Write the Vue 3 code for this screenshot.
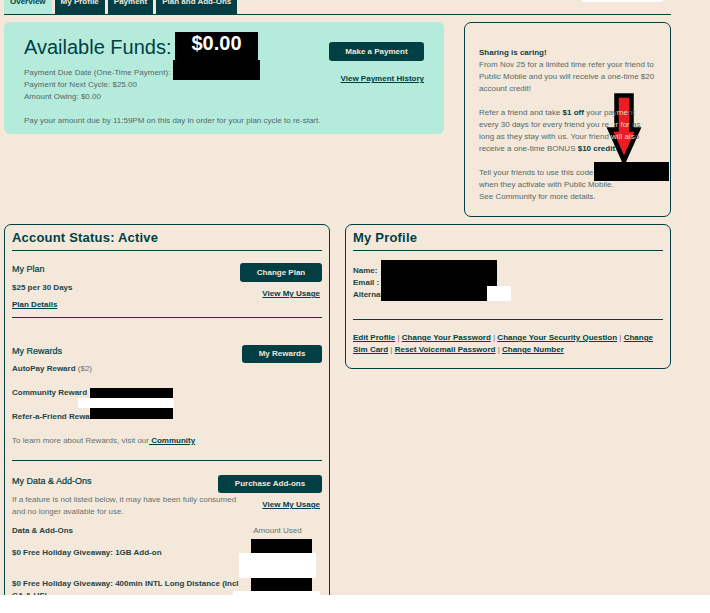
<script setup>
const tabs = [
  { label: 'Overview', active: true },
  { label: 'My Profile' },
  { label: 'Payment' },
  { label: 'Plan and Add-Ons' }
]
const profileLinks = ['Edit Profile', 'Change Your Password', 'Change Your Security Question', 'Change Sim Card', 'Reset Voicemail Password', 'Change Number']
</script>

<template>
  <div class="page">
    <div class="top-chip"></div>
    <nav class="tabs">
      <a v-for="t in tabs" :key="t.label" class="tab" :class="{ active: t.active }">{{ t.label }}</a>
    </nav>

    <section class="row top-row">
      <div class="funds">
        <div class="funds-main">
          <h1>Available Funds:</h1>
          <p class="meta">Payment Due Date (One-Time Payment):<br>Payment for Next Cycle: $25.00<br>Amount Owing: $0.00</p>
          <p class="meta note">Pay your amount due by 11:59PM on this day in order for your plan cycle to re-start.</p>
        </div>
        <div class="funds-actions">
          <a class="btn pay">Make a Payment</a>
          <a class="link">View Payment History</a>
        </div>
        <div class="mask amount">$0.00</div>
        <div class="mask due"></div>
      </div>

      <aside class="share card">
        <svg class="arrow" width="38" height="74" viewBox="0 0 38 74">
          <path d="M10.5 2.5H25.5V36.5H32L18 68L4 36.5H10.5Z" fill="#ed1c24" stroke="#000" stroke-width="4.5" stroke-linejoin="miter" />
        </svg>
        <p><b class="head">Sharing is caring!</b><br>From Nov 25 for a limited time refer your friend to Public Mobile and you will receive a one-time $20 account credit!</p>
        <p>Refer a friend and take <b>$1 off</b> your pay<span class="over">me</span>nt<br>every 30 days for every friend you re<span class="over">fer for</span> as<br>long as they stay with us. Your friend <span class="over">will als</span>o<br>receive a one-time BONUS <b>$10 credit</b>.</p>
        <p>Tell your friends to use this code<br>when they activate with Public Mobile.<br>See Community for more details.</p>
        <div class="mask code"></div>
      </aside>
    </section>

    <section class="row bottom-row">
      <div class="card account">
        <h2>Account Status: Active</h2>

        <div class="block plan">
          <div class="block-text">
            <h3>My Plan</h3>
            <p class="strong">$25 per 30 Days</p>
            <a class="link">Plan Details</a>
          </div>
          <div class="block-actions">
            <a class="btn change">Change Plan</a>
            <a class="link">View My Usage</a>
          </div>
        </div>

        <div class="block rewards">
          <div class="block-text">
            <h3>My Rewards</h3>
            <p class="strong">AutoPay Reward <span class="muted">($2)</span></p>
            <p class="strong gap">Community Reward</p>
            <p class="strong gap">Refer-a-Friend Reward</p>
            <p class="muted learn">To learn more about Rewards, visit our<a class="link"> Community</a></p>
          </div>
          <div class="block-actions">
            <a class="btn rewards-btn">My Rewards</a>
          </div>
          <div class="mask r1"></div>
          <div class="mask r2"></div>
          <div class="mask r3"></div>
        </div>

        <div class="block addons">
          <div class="addons-head">
            <div class="block-text">
              <h3>My Data &amp; Add-Ons</h3>
              <p class="muted intro">If a feature is not listed below, it may have been fully consumed and no longer available for use.</p>
            </div>
            <div class="block-actions">
              <a class="btn add">Purchase Add-ons</a>
              <a class="link">View My Usage</a>
            </div>
          </div>
          <div class="usage">
            <span class="strong">Data &amp; Add-Ons</span><span class="muted amount-used">Amount Used</span>
            <span class="strong item-a">$0 Free Holiday Giveaway: 1GB Add-on</span><span></span>
            <span class="strong item-b">$0 Free Holiday Giveaway: 400min INTL Long Distance (Incl CA &amp; US)</span><span></span>
          </div>
          <div class="mask u1"></div>
          <div class="mask white u2"></div>
          <div class="mask u3"></div>
          <div class="mask white u4"></div>
        </div>
      </div>

      <div class="card profile">
        <h2>My Profile</h2>
        <div class="details strong">Name: <br>Email : <br>Alternate Email:
          <div class="mask white p3"></div>
          <div class="mask p1"></div>
          <div class="mask p2"></div>
        </div>
        <p class="profile-links">
          <template v-for="(l, i) in profileLinks" :key="l"><a class="link">{{ l }}</a><span v-if="i < profileLinks.length - 1" class="muted"> | </span></template>
        </p>
      </div>
    </section>
  </div>
</template>

<style>
html, body { background: #fff; margin: 0; }
</style>

<style scoped>
.page {
  position: relative;
  width: 710px;
  height: 595px;
  overflow: hidden;
  background: #f3e8d9;
  color: #56686a;
  font: 8px/12px "Liberation Sans", Arial, sans-serif;
  box-sizing: border-box;
  padding: 0 39px 0 4px;
}
* { box-sizing: border-box; }
p, h1, h2, h3 { margin: 0; }
.top-chip { position: absolute; left: 582px; top: 0; width: 81px; height: 2px; background: #fff; border-radius: 0 0 3px 3px; }
.tabs { display: flex; gap: 3px; height: 15px; border-bottom: 1px solid #023f45; margin-bottom: 7px; }
.tab { height: 14px; padding: 0 6px; background: #023f45; color: #f3e8d9; font-weight: 700; line-height: 4px; white-space: nowrap; }
.tab.active { background: #b5ebdb; color: #023f45; }
.row { display: flex; align-items: flex-start; }
.top-row { gap: 20px; height: 202px; }
.bottom-row { gap: 15px; }
.funds {
  position: relative;
  display: flex;
  justify-content: space-between;
  width: 440px;
  height: 112px;
  padding: 12px 20px 0 20px;
  background: #b5ebdb;
  border-radius: 6px;
}
h1 { font-size: 20px; font-weight: 400; line-height: 26px; color: #023f45; margin-bottom: 7px; }
.note { margin-top: 12px; }
.funds-actions { display: flex; flex-direction: column; align-items: flex-end; padding-top: 8px; }
.btn { display: flex; align-items: center; justify-content: center; height: 19px; background: #023f45; color: #f3e8d9; font-weight: 700; border-radius: 3px; white-space: nowrap; }
.pay { width: 95px; }
.link { color: #023f45; font-weight: 700; text-decoration: underline; }
.funds-actions .link { margin-top: 12px; }
.mask { position: absolute; background: #000; }
.mask.white { background: #fff; }
.amount { left: 171px; top: 10px; width: 83px; height: 28px; color: #fff; font-size: 20px; font-weight: 700; line-height: 22px; text-align: center; }
.due { left: 169px; top: 38px; width: 87px; height: 20px; }
.card { position: relative; border: 1px solid #023f45; border-radius: 7px; }
.share { width: 207px; height: 195px; padding: 24px 14px 0; }
.share p { position: relative; margin-bottom: 12px; }
.share b { color: #023f45; }
.over { color: #e9d8d0; }
.head { color: #1d3b3d !important; }
.code { left: 129px; top: 139px; width: 75px; height: 19px; }
.arrow { position: absolute; left: 141px; top: 70px; }
.account { width: 326px; height: 420px; padding: 0 7px; }
.profile { width: 326px; height: 145px; padding: 0 7px; }
h2 { height: 26px; font-size: 13px; line-height: 25px; font-weight: 700; color: #023f45; border-bottom: 1px solid #023f45; letter-spacing: .2px; }
h3 { font-size: 9px; font-weight: 400; color: #023f45; -webkit-text-stroke: .2px #023f45; line-height: 14px; }
.strong { color: #1f4347; font-weight: 700; }
.block { position: relative; display: flex; justify-content: space-between; border-bottom: 1px solid #023f45; }
.block-actions { display: flex; flex-direction: column; align-items: flex-end; }
.block-actions .link { margin: 6px 2px 0 0; }
.plan { height: 67px; padding-top: 11px; }
.plan .block-text p { margin: 6px 0 5px; }
.plan .block-actions { padding-top: 1px; }
.change { width: 82px; }
.rewards { height: 143px; padding-top: 26px; }
.rewards .block-text > p { margin-top: 5px; }
.rewards .gap { margin-top: 12px !important; }
.rewards-btn { width: 80px; height: 18px; }
.rewards .block-actions { padding-top: 1px; }
.learn { margin-top: 12px !important; font-weight: 400; }
.learn .link { white-space: pre; }
.r1 { left: 78px; top: 70px; width: 83px; height: 10px; }
.r2 { left: 66px; top: 80px; width: 96px; height: 10px; background: #fff; }
.r3 { left: 78px; top: 90px; width: 83px; height: 11px; }
.addons { display: block; border-bottom: 0; padding-top: 13px; }
.addons-head { display: flex; }
.addons-head .block-text { flex: 0 0 229px; }
.addons-head .block-actions { flex: 1; margin-left: -23px; padding-top: 1px; }
.intro { margin-top: 6px; }
.add { width: 104px; height: 18px; }
.usage { display: grid; grid-template-columns: 229px 1fr; margin-top: 7px; }
.amount-used { text-align: center; font-weight: 400; padding-right: 8px; }
.muted { color: #66726f; font-weight: 400; }
.item-a { margin-top: 10px; height: 31px; }
.u1 { left: 239px; top: 78px; width: 61px; height: 14px; }
.u2 { left: 227px; top: 92px; width: 77px; height: 25px; }
.u3 { left: 239px; top: 117px; width: 61px; height: 13px; }
.u4 { left: 221px; top: 130px; width: 87px; height: 20px; }
.details { position: relative; height: 69px; padding-top: 14px; border-bottom: 1px solid #023f45; }
.p1 { left: 28px; top: 9px; width: 116px; height: 26px; }
.p2 { left: 28px; top: 35px; width: 106px; height: 15px; }
.p3 { left: 134px; top: 35px; width: 24px; height: 15px; }
.profile-links { margin-top: 12px; }
</style>
